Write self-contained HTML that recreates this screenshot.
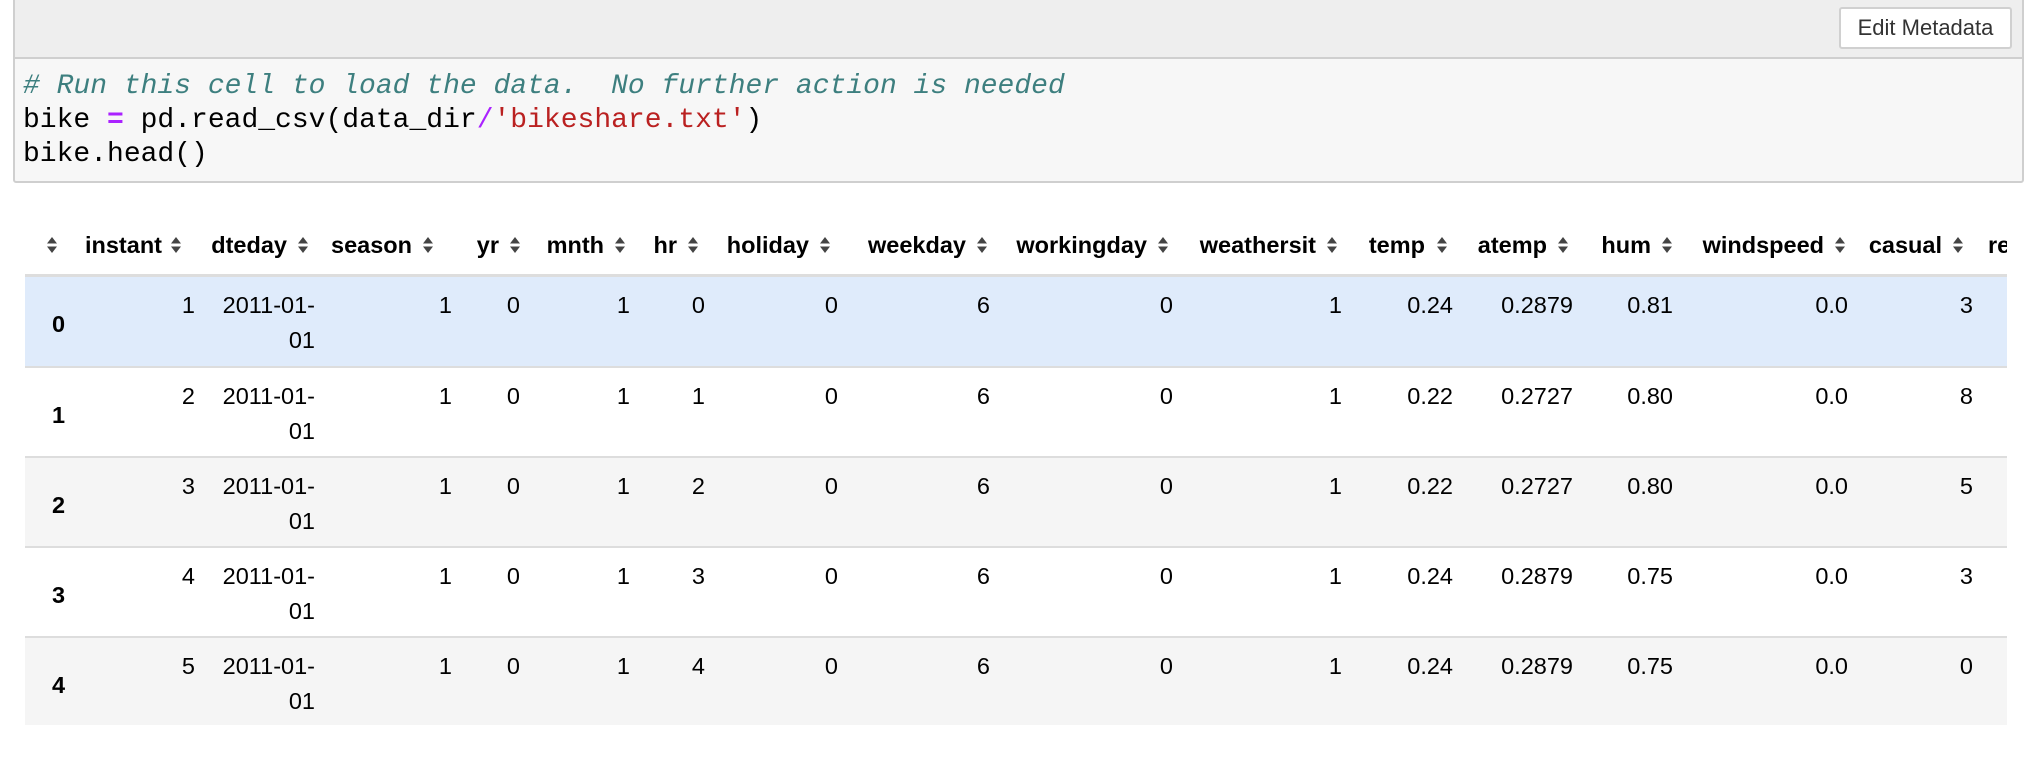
<!DOCTYPE html>
<html><head><meta charset="utf-8">
<style>
body{margin:0;width:2042px;height:764px;background:#fff;position:relative;overflow:hidden;font-family:"Liberation Sans",Arial,sans-serif;}
.tb{position:absolute;left:13px;top:0;width:2011px;height:57px;background:#eeeeee;border-left:2px solid #cfcfcf;border-right:2px solid #cfcfcf;box-sizing:border-box;}
.btn{position:absolute;left:1839px;top:7px;width:173px;height:42px;background:#fff;border:2px solid #d0d0d0;border-radius:3px;box-sizing:border-box;font-size:22px;line-height:38px;text-align:center;color:#333;}
.code{position:absolute;left:13px;top:57px;width:2011px;height:126px;background:#f7f7f7;border:2px solid #cfcfcf;border-radius:0 0 3px 3px;box-sizing:border-box;}
.cl{position:absolute;left:23px;font-family:"Liberation Mono",monospace;font-size:28px;line-height:34px;white-space:pre;color:#000;}
.cm{color:#3d7f7f;font-style:italic;}
.op{color:#aa22ff;font-weight:bold;}
.st{color:#ba2121;}
.wrap{position:absolute;left:0;top:0;width:2007px;height:764px;overflow:hidden;}
.band{position:absolute;left:25px;width:1982px;}
.ln{position:absolute;left:25px;width:1982px;background:#dddddd;}
.h{position:absolute;top:230px;font-size:23.5px;line-height:30px;font-weight:bold;color:#000;white-space:nowrap;}
.ic{position:absolute;top:235px;width:12px;height:20px;}
.v{position:absolute;font-size:23.5px;line-height:35px;color:#000;white-space:nowrap;text-align:right;}
.ix{position:absolute;left:52px;font-size:23.5px;line-height:35px;font-weight:bold;color:#000;}
</style></head><body>
<div class="tb"></div>
<div class="btn">Edit Metadata</div>
<div class="code"></div>
<div class="cl" style="top:70px"><span class="cm"># Run this cell to load the data.  No further action is needed</span></div>
<div class="cl" style="top:104px">bike <span class="op">=</span> pd.read_csv(data_dir<span class="op" style="font-weight:normal">/</span><span class="st">'bikeshare.txt'</span>)</div>
<div class="cl" style="top:138px">bike.head()</div>

<div class="wrap">
<div class="h" style="right:1845px">instant</div>
<div class="h" style="right:1720px">dteday</div>
<div class="h" style="right:1595px">season</div>
<div class="h" style="right:1508px">yr</div>
<div class="h" style="right:1403px">mnth</div>
<div class="h" style="right:1330px">hr</div>
<div class="h" style="right:1198px">holiday</div>
<div class="h" style="right:1041px">weekday</div>
<div class="h" style="right:860px">workingday</div>
<div class="h" style="right:691px">weathersit</div>
<div class="h" style="right:582px">temp</div>
<div class="h" style="right:460px">atemp</div>
<div class="h" style="right:356px">hum</div>
<div class="h" style="right:183px">windspeed</div>
<div class="h" style="right:65px">casual</div>
<div class="h" style="left:1988px">registered</div>

<svg class="ic" style="left:46px" viewBox="0 0 12 20"><path d="M1 8.5L6 2L11 8.5Z M1 11.5L6 18L11 11.5Z" fill="#444"/></svg>
<svg class="ic" style="left:170px" viewBox="0 0 12 20"><path d="M1 8.5L6 2L11 8.5Z M1 11.5L6 18L11 11.5Z" fill="#444"/></svg>
<svg class="ic" style="left:297px" viewBox="0 0 12 20"><path d="M1 8.5L6 2L11 8.5Z M1 11.5L6 18L11 11.5Z" fill="#444"/></svg>
<svg class="ic" style="left:422px" viewBox="0 0 12 20"><path d="M1 8.5L6 2L11 8.5Z M1 11.5L6 18L11 11.5Z" fill="#444"/></svg>
<svg class="ic" style="left:509px" viewBox="0 0 12 20"><path d="M1 8.5L6 2L11 8.5Z M1 11.5L6 18L11 11.5Z" fill="#444"/></svg>
<svg class="ic" style="left:614px" viewBox="0 0 12 20"><path d="M1 8.5L6 2L11 8.5Z M1 11.5L6 18L11 11.5Z" fill="#444"/></svg>
<svg class="ic" style="left:687px" viewBox="0 0 12 20"><path d="M1 8.5L6 2L11 8.5Z M1 11.5L6 18L11 11.5Z" fill="#444"/></svg>
<svg class="ic" style="left:819px" viewBox="0 0 12 20"><path d="M1 8.5L6 2L11 8.5Z M1 11.5L6 18L11 11.5Z" fill="#444"/></svg>
<svg class="ic" style="left:976px" viewBox="0 0 12 20"><path d="M1 8.5L6 2L11 8.5Z M1 11.5L6 18L11 11.5Z" fill="#444"/></svg>
<svg class="ic" style="left:1157px" viewBox="0 0 12 20"><path d="M1 8.5L6 2L11 8.5Z M1 11.5L6 18L11 11.5Z" fill="#444"/></svg>
<svg class="ic" style="left:1326px" viewBox="0 0 12 20"><path d="M1 8.5L6 2L11 8.5Z M1 11.5L6 18L11 11.5Z" fill="#444"/></svg>
<svg class="ic" style="left:1436px" viewBox="0 0 12 20"><path d="M1 8.5L6 2L11 8.5Z M1 11.5L6 18L11 11.5Z" fill="#444"/></svg>
<svg class="ic" style="left:1557px" viewBox="0 0 12 20"><path d="M1 8.5L6 2L11 8.5Z M1 11.5L6 18L11 11.5Z" fill="#444"/></svg>
<svg class="ic" style="left:1661px" viewBox="0 0 12 20"><path d="M1 8.5L6 2L11 8.5Z M1 11.5L6 18L11 11.5Z" fill="#444"/></svg>
<svg class="ic" style="left:1834px" viewBox="0 0 12 20"><path d="M1 8.5L6 2L11 8.5Z M1 11.5L6 18L11 11.5Z" fill="#444"/></svg>
<svg class="ic" style="left:1952px" viewBox="0 0 12 20"><path d="M1 8.5L6 2L11 8.5Z M1 11.5L6 18L11 11.5Z" fill="#444"/></svg>

<div class="ln" style="top:274px;height:3px"></div>
<div class="band" style="top:277px;height:89px;background:#dfebfb"></div>
<div class="ln" style="top:366px;height:2px"></div>
<div class="band" style="top:368px;height:88px;background:#fff"></div>
<div class="ln" style="top:456px;height:2px"></div>
<div class="band" style="top:458px;height:88px;background:#f5f5f5"></div>
<div class="ln" style="top:546px;height:2px"></div>
<div class="band" style="top:548px;height:88px;background:#fff"></div>
<div class="ln" style="top:636px;height:2px"></div>
<div class="band" style="top:638px;height:87px;background:#f5f5f5"></div>

<div class="ix" style="top:307px">0</div>
<div class="v" style="top:288px;right:1812px">1</div>
<div class="v" style="top:288px;right:1692px">2011-01-<br>01</div>
<div class="v" style="top:288px;right:1555px">1</div>
<div class="v" style="top:288px;right:1487px">0</div>
<div class="v" style="top:288px;right:1377px">1</div>
<div class="v" style="top:288px;right:1302px">0</div>
<div class="v" style="top:288px;right:1169px">0</div>
<div class="v" style="top:288px;right:1017px">6</div>
<div class="v" style="top:288px;right:834px">0</div>
<div class="v" style="top:288px;right:665px">1</div>
<div class="v" style="top:288px;right:554px">0.24</div>
<div class="v" style="top:288px;right:434px">0.2879</div>
<div class="v" style="top:288px;right:334px">0.81</div>
<div class="v" style="top:288px;right:159px">0.0</div>
<div class="v" style="top:288px;right:34px">3</div>

<div class="ix" style="top:398px">1</div>
<div class="v" style="top:379px;right:1812px">2</div>
<div class="v" style="top:379px;right:1692px">2011-01-<br>01</div>
<div class="v" style="top:379px;right:1555px">1</div>
<div class="v" style="top:379px;right:1487px">0</div>
<div class="v" style="top:379px;right:1377px">1</div>
<div class="v" style="top:379px;right:1302px">1</div>
<div class="v" style="top:379px;right:1169px">0</div>
<div class="v" style="top:379px;right:1017px">6</div>
<div class="v" style="top:379px;right:834px">0</div>
<div class="v" style="top:379px;right:665px">1</div>
<div class="v" style="top:379px;right:554px">0.22</div>
<div class="v" style="top:379px;right:434px">0.2727</div>
<div class="v" style="top:379px;right:334px">0.80</div>
<div class="v" style="top:379px;right:159px">0.0</div>
<div class="v" style="top:379px;right:34px">8</div>

<div class="ix" style="top:488px">2</div>
<div class="v" style="top:469px;right:1812px">3</div>
<div class="v" style="top:469px;right:1692px">2011-01-<br>01</div>
<div class="v" style="top:469px;right:1555px">1</div>
<div class="v" style="top:469px;right:1487px">0</div>
<div class="v" style="top:469px;right:1377px">1</div>
<div class="v" style="top:469px;right:1302px">2</div>
<div class="v" style="top:469px;right:1169px">0</div>
<div class="v" style="top:469px;right:1017px">6</div>
<div class="v" style="top:469px;right:834px">0</div>
<div class="v" style="top:469px;right:665px">1</div>
<div class="v" style="top:469px;right:554px">0.22</div>
<div class="v" style="top:469px;right:434px">0.2727</div>
<div class="v" style="top:469px;right:334px">0.80</div>
<div class="v" style="top:469px;right:159px">0.0</div>
<div class="v" style="top:469px;right:34px">5</div>

<div class="ix" style="top:578px">3</div>
<div class="v" style="top:559px;right:1812px">4</div>
<div class="v" style="top:559px;right:1692px">2011-01-<br>01</div>
<div class="v" style="top:559px;right:1555px">1</div>
<div class="v" style="top:559px;right:1487px">0</div>
<div class="v" style="top:559px;right:1377px">1</div>
<div class="v" style="top:559px;right:1302px">3</div>
<div class="v" style="top:559px;right:1169px">0</div>
<div class="v" style="top:559px;right:1017px">6</div>
<div class="v" style="top:559px;right:834px">0</div>
<div class="v" style="top:559px;right:665px">1</div>
<div class="v" style="top:559px;right:554px">0.24</div>
<div class="v" style="top:559px;right:434px">0.2879</div>
<div class="v" style="top:559px;right:334px">0.75</div>
<div class="v" style="top:559px;right:159px">0.0</div>
<div class="v" style="top:559px;right:34px">3</div>

<div class="ix" style="top:668px">4</div>
<div class="v" style="top:649px;right:1812px">5</div>
<div class="v" style="top:649px;right:1692px">2011-01-<br>01</div>
<div class="v" style="top:649px;right:1555px">1</div>
<div class="v" style="top:649px;right:1487px">0</div>
<div class="v" style="top:649px;right:1377px">1</div>
<div class="v" style="top:649px;right:1302px">4</div>
<div class="v" style="top:649px;right:1169px">0</div>
<div class="v" style="top:649px;right:1017px">6</div>
<div class="v" style="top:649px;right:834px">0</div>
<div class="v" style="top:649px;right:665px">1</div>
<div class="v" style="top:649px;right:554px">0.24</div>
<div class="v" style="top:649px;right:434px">0.2879</div>
<div class="v" style="top:649px;right:334px">0.75</div>
<div class="v" style="top:649px;right:159px">0.0</div>
<div class="v" style="top:649px;right:34px">0</div>
</div>
</body></html>
